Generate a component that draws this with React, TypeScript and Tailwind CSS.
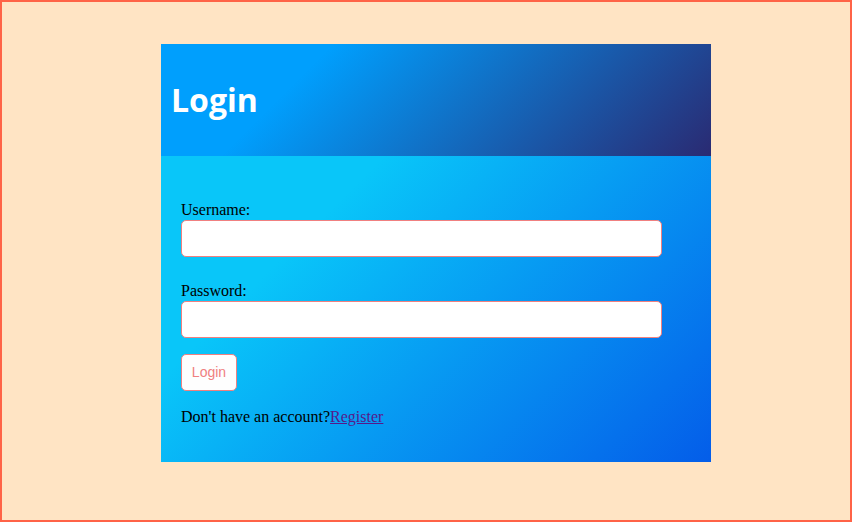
export default function App() {
  return (
    <div className="box-border h-[522px] w-full overflow-hidden border-2 border-[#ff6347] bg-[#ffe4c4] pl-[159px] pt-[42px] font-['Liberation_Serif',serif]">
      <div className="w-[550px]">
        <header className="flex h-[112px] items-center bg-[#2a2a72] bg-[linear-gradient(315deg,#2a2a72_0%,#009ffd_74%)] px-[10px]">
          <h1 className="font-['Open_Sans',sans-serif] text-[32px] font-bold leading-none text-white">Login</h1>
        </header>
        <div className="bg-[#045de9] bg-[linear-gradient(315deg,#045de9_0%,#09c6f9_74%)] px-[20px] pb-[36px] pt-[45px] text-[16px] text-black">
          <form onSubmit={(e) => e.preventDefault()}>
            <div>
              <label htmlFor="username" className="block leading-[18px]">Username:</label>
              <input id="username" type="text" className="mt-[1px] box-border block h-[37px] w-[481px] rounded-[5px] border border-[#f08080] bg-white px-2 outline-none" />
            </div>
            <div className="mt-[25px]">
              <label htmlFor="password" className="block leading-[18px]">Password:</label>
              <input id="password" type="password" className="mt-[1px] box-border block h-[37px] w-[481px] rounded-[5px] border border-[#f08080] bg-white px-2 outline-none" />
            </div>
            <button type="submit" className="mt-[16px] box-border h-[37px] w-[56px] rounded-[5px] border border-[#f08080] bg-[#fefefe] font-['Liberation_Sans',Arial,sans-serif] text-[14px] text-[#f08080]">
              Login
            </button>
          </form>
          <p className="mt-[17px] leading-[18px]">
            Don't have an account?<a href="#" className="text-[#551a8b] underline">Register</a>
          </p>
        </div>
      </div>
    </div>
  );
}
